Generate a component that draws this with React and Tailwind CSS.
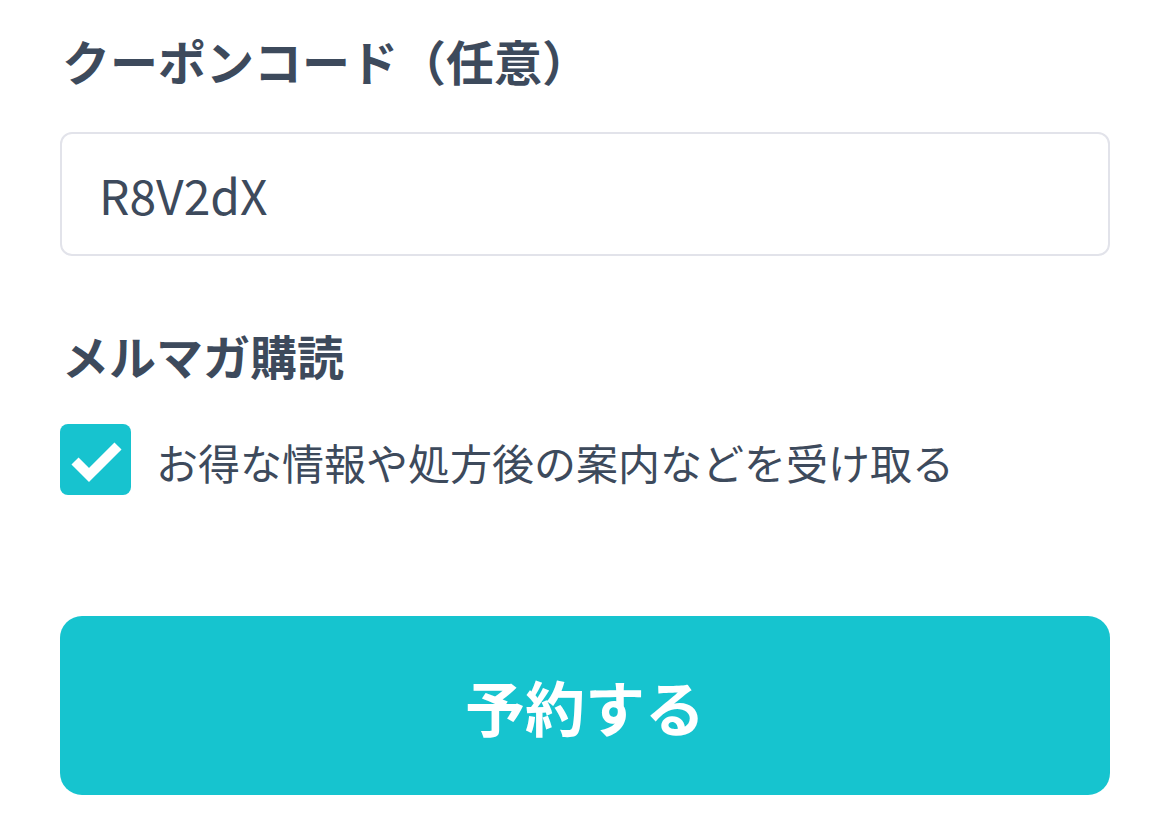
export default function App() {
  return (
    <div className="min-h-screen bg-white px-[60px] pt-[24px] text-[#3d4a5c] font-['Noto_Sans_CJK_JP','Noto_Sans',sans-serif]">
      <h2 className="text-[48px] font-bold leading-[72px] pl-[2px]">クーポンコード（任意）</h2>
      <div className="mt-[36px] h-[124px] rounded-[12px] border-2 border-[#e2e3ea] flex items-center px-[37px]">
        <input
          type="text"
          defaultValue="R8V2dX"
          className="w-full bg-transparent outline-none text-[48px] text-[#3d4a5c] font-['Noto_Sans_CJK_JP','Noto_Sans',sans-serif]"
        />
      </div>

      <h2 className="mt-[63px] text-[47px] font-bold leading-[72px] pl-[2px]">メルマガ購読</h2>
      <label className="mt-[33px] flex items-center gap-[25px]">
        <span className="w-[71px] h-[71px] rounded-[8px] bg-[#17c3cf] flex items-center justify-center shrink-0">
          <svg width="71" height="71" viewBox="0 0 71 71" fill="none">
            <polyline points="15,37 29,51 58,22" stroke="#fff" strokeWidth="10" strokeLinecap="butt" strokeLinejoin="miter" />
          </svg>
        </span>
        <span className="text-[42px] leading-[60px] pt-[4px]">お得な情報や処方後の案内などを受け取る</span>
      </label>

      <button className="mt-[121px] w-full h-[179px] rounded-[22px] bg-[#16c4cf] text-white text-[60px] font-bold flex items-center justify-center">
        予約する
      </button>
    </div>
  );
}
